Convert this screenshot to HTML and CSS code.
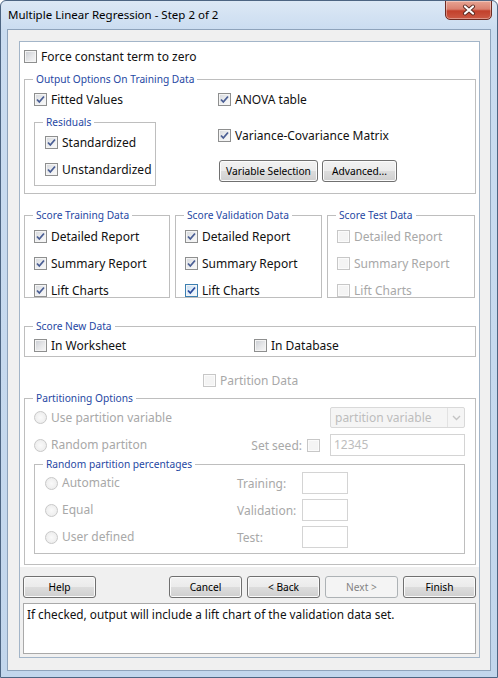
FILE: index.html
```html
<!DOCTYPE html>
<html lang="en">
<head>
    <meta charset="UTF-8">
    <title>Multiple Linear Regression - Step 2 of 2</title>
    <link rel="stylesheet" href="styles.css">
</head>
<body>
<div class="window">
    <div class="titlebar">
        <span class="title">Multiple Linear Regression - Step 2 of 2</span>
        <button class="close-btn" type="button">
            <svg width="14" height="12" viewBox="0 0 14 12">
                <path d="M3 2.5 L11 9.5 M11 2.5 L3 9.5" stroke="#5a2a22" stroke-width="4" stroke-linecap="round"/>
                <path d="M3 2.5 L11 9.5 M11 2.5 L3 9.5" stroke="#fff" stroke-width="2.2" stroke-linecap="round"/>
            </svg>
        </button>
    </div>

    <div class="client">
        <div class="panel">
            <div class="options">
                <label class="opt force"><span class="cb"></span>Force constant term to zero</label>

                <!-- Output options -->
                <div class="group output-group">
                    <span class="legend">Output Options On Training Data</span>
                    <div class="col-left">
                        <label class="opt"><span class="cb on"><svg width="11" height="11" viewBox="0 0 11 11"><path d="M2 5.5 L4.3 8 L9 2.5" fill="none" stroke="#4a5e94" stroke-width="1.8"/></svg></span>Fitted Values</label>
                        <div class="group residuals">
                            <span class="legend">Residuals</span>
                            <label class="opt"><span class="cb on"><svg width="11" height="11" viewBox="0 0 11 11"><path d="M2 5.5 L4.3 8 L9 2.5" fill="none" stroke="#4a5e94" stroke-width="1.8"/></svg></span>Standardized</label>
                            <label class="opt"><span class="cb on"><svg width="11" height="11" viewBox="0 0 11 11"><path d="M2 5.5 L4.3 8 L9 2.5" fill="none" stroke="#4a5e94" stroke-width="1.8"/></svg></span>Unstandardized</label>
                        </div>
                    </div>
                    <div class="col-right">
                        <label class="opt"><span class="cb on"><svg width="11" height="11" viewBox="0 0 11 11"><path d="M2 5.5 L4.3 8 L9 2.5" fill="none" stroke="#4a5e94" stroke-width="1.8"/></svg></span>ANOVA table</label>
                        <label class="opt covariance"><span class="cb on"><svg width="11" height="11" viewBox="0 0 11 11"><path d="M2 5.5 L4.3 8 L9 2.5" fill="none" stroke="#4a5e94" stroke-width="1.8"/></svg></span>Variance-Covariance Matrix</label>
                        <div class="btn-row">
                            <button class="btn btn-varsel" type="button">Variable Selection</button>
                            <button class="btn btn-adv" type="button">Advanced...</button>
                        </div>
                    </div>
                </div>

                <!-- Score groups -->
                <div class="score-row">
                    <div class="group score score-train">
                        <span class="legend">Score Training Data</span>
                        <label class="opt"><span class="cb on"><svg width="11" height="11" viewBox="0 0 11 11"><path d="M2 5.5 L4.3 8 L9 2.5" fill="none" stroke="#4a5e94" stroke-width="1.8"/></svg></span>Detailed Report</label>
                        <label class="opt"><span class="cb on"><svg width="11" height="11" viewBox="0 0 11 11"><path d="M2 5.5 L4.3 8 L9 2.5" fill="none" stroke="#4a5e94" stroke-width="1.8"/></svg></span>Summary Report</label>
                        <label class="opt"><span class="cb on"><svg width="11" height="11" viewBox="0 0 11 11"><path d="M2 5.5 L4.3 8 L9 2.5" fill="none" stroke="#4a5e94" stroke-width="1.8"/></svg></span>Lift Charts</label>
                    </div>
                    <div class="group score score-valid">
                        <span class="legend">Score Validation Data</span>
                        <label class="opt"><span class="cb on"><svg width="11" height="11" viewBox="0 0 11 11"><path d="M2 5.5 L4.3 8 L9 2.5" fill="none" stroke="#4a5e94" stroke-width="1.8"/></svg></span>Detailed Report</label>
                        <label class="opt"><span class="cb on"><svg width="11" height="11" viewBox="0 0 11 11"><path d="M2 5.5 L4.3 8 L9 2.5" fill="none" stroke="#4a5e94" stroke-width="1.8"/></svg></span>Summary Report</label>
                        <label class="opt"><span class="cb on focus"><svg width="11" height="11" viewBox="0 0 11 11"><path d="M2 5.5 L4.3 8 L9 2.5" fill="none" stroke="#2b4a9c" stroke-width="1.8"/></svg></span>Lift Charts</label>
                    </div>
                    <div class="group score score-test">
                        <span class="legend">Score Test Data</span>
                        <label class="opt disabled"><span class="cb dis"></span>Detailed Report</label>
                        <label class="opt disabled"><span class="cb dis"></span>Summary Report</label>
                        <label class="opt disabled"><span class="cb dis"></span>Lift Charts</label>
                    </div>
                </div>

                <!-- Score new data -->
                <div class="group score-new">
                    <span class="legend">Score New Data</span>
                    <label class="opt worksheet"><span class="cb"></span>In Worksheet</label>
                    <label class="opt"><span class="cb"></span>In Database</label>
                </div>

                <label class="opt disabled partition-data"><span class="cb dis"></span>Partition Data</label>

                <!-- Partitioning -->
                <div class="group partitioning">
                    <span class="legend">Partitioning Options</span>
                    <div class="part-row">
                        <label class="opt disabled"><span class="rb"></span>Use partition variable</label>
                        <div class="combo"><span class="combo-text">partition variable</span><span class="combo-arrow"><svg width="9" height="6" viewBox="0 0 9 6"><path d="M1 1 L4.5 4.5 L8 1" fill="none" stroke="#c4c4c4" stroke-width="1.4"/></svg></span></div>
                    </div>
                    <div class="part-row seed-row">
                        <label class="opt disabled"><span class="rb"></span>Random partiton</label>
                        <div class="seed">
                            <span class="seed-label">Set seed:</span>
                            <span class="cb dis"></span>
                            <span class="textbox seed-box">12345</span>
                        </div>
                    </div>
                    <div class="group percentages">
                        <span class="legend">Random partition percentages</span>
                        <div class="pct-row">
                            <label class="opt disabled pct-opt"><span class="rb"></span>Automatic</label>
                            <span class="pct-label">Training:</span>
                            <span class="textbox pct-box"></span>
                        </div>
                        <div class="pct-row">
                            <label class="opt disabled pct-opt"><span class="rb"></span>Equal</label>
                            <span class="pct-label">Validation:</span>
                            <span class="textbox pct-box"></span>
                        </div>
                        <div class="pct-row">
                            <label class="opt disabled pct-opt"><span class="rb"></span>User defined</label>
                            <span class="pct-label">Test:</span>
                            <span class="textbox pct-box"></span>
                        </div>
                    </div>
                </div>
            </div>

            <div class="footer">
                <div class="buttons">
                    <button class="btn wizard-btn" type="button">Help</button>
                    <div class="nav-buttons">
                        <button class="btn wizard-btn" type="button">Cancel</button>
                        <button class="btn wizard-btn" type="button">&lt; Back</button>
                        <button class="btn wizard-btn" type="button" disabled>Next &gt;</button>
                        <button class="btn wizard-btn" type="button">Finish</button>
                    </div>
                </div>
                <div class="description">If checked, output will include a lift chart of the validation data set.</div>
            </div>
        </div>
    </div>
</div>
</body>
</html>
```

FILE: styles.css
```css
* {
    box-sizing: border-box;
    margin: 0;
    padding: 0;
}

body {
    font-family: "Noto Sans", sans-serif;
    font-size: 12px;
    color: #111;
    background: #fff;
}

/* Window frame */
.window {
    width: 498px;
    height: 678px;
    border: 1px solid #4d6582;
    border-radius: 6px 6px 0 0;
    background: linear-gradient(to bottom, #dce8f5 0, #cadcf0 30px, #c2d6ec 100%);
    overflow: hidden;
}

.titlebar {
    height: 28px;
    display: flex;
    justify-content: space-between;
    align-items: flex-start;
}

.title {
    padding-left: 7px;
    margin-top: 6px;
    font-size: 11.5px;
    line-height: 16px;
    color: #000;
}

.close-btn {
    width: 47px;
    height: 20px;
    margin-top: -1px;
    margin-right: 5px;
    border: 1px solid #6e2b22;
    border-radius: 0 0 5px 5px;
    background: linear-gradient(to bottom, #e7a493 0, #d98170 45%, #c2402b 55%, #cc5a45 100%);
    box-shadow: inset 0 0 0 1px rgba(255, 255, 255, 0.35);
    display: flex;
    align-items: center;
    justify-content: center;
}

.client {
    margin: 0 6px;
    height: 642px;
    border: 1px solid #8ea3bb;
    background: #f0f0f0;
    padding: 11px 0 0 11px;
}

.panel {
    width: 461px;
    height: 617px;
    border: 1px solid #a3b5c8;
    display: flex;
    flex-direction: column;
}

.options {
    height: 525px;
    background: #fff;
    padding: 8px 3px 0 4px;
    display: flex;
    flex-direction: column;
}

/* Checkbox / radio rows */
.opt {
    display: flex;
    align-items: center;
    gap: 4px;
    height: 13px;
    white-space: nowrap;
    line-height: 16px;
}

.opt.disabled,
.seed-label,
.pct-label {
    color: #a8a8a8;
}

.cb {
    width: 13px;
    height: 13px;
    flex: none;
    border: 1px solid #8e8f8f;
    background: linear-gradient(135deg, #c9ccd2 0, #e6e7e9 55%, #f7f7f7 100%);
    box-shadow: inset 0 0 0 1px #f4f4f4;
    display: flex;
    align-items: center;
    justify-content: center;
}

.cb.on {
    background: linear-gradient(135deg, #d3d6db 0, #eeeff0 55%, #fafafa 100%);
}

.cb.focus {
    border-color: #3c7fb1;
    background: linear-gradient(135deg, #c4dcf2 0, #e6f1fb 60%, #f6fbff 100%);
}

.cb.dis {
    border-color: #c7c7c7;
    background: #f4f4f4;
    box-shadow: inset 0 0 0 1px #fbfbfb;
}

.rb {
    width: 13px;
    height: 13px;
    flex: none;
    border-radius: 50%;
    border: 1px solid #c8c8c8;
    background: radial-gradient(circle at 50% 50%, #fafafa 0, #eeeeee 70%);
}

/* Group boxes */
.group {
    position: relative;
    border: 1px solid #bebebe;
}

.legend {
    position: absolute;
    top: -9px;
    left: 8px;
    padding: 0 3px;
    background: #fff;
    color: #1f48a3;
    font-size: 10.2px;
    line-height: 16px;
    white-space: nowrap;
}

.output-group {
    margin-top: 16px;
    height: 115px;
    display: flex;
}

.col-left {
    width: 193px;
    padding: 13px 0 0 9px;
}

.residuals {
    margin-top: 16px;
    width: 122px;
    height: 64px;
    padding: 13px 0 0 10px;
    display: flex;
    flex-direction: column;
    gap: 14px;
}

.col-right {
    padding-top: 13px;
    display: flex;
    flex-direction: column;
}

.covariance {
    margin-top: 23px;
}

.btn-row {
    margin-top: 18px;
    padding-left: 1px;
    display: flex;
    gap: 4px;
}

.btn {
    height: 22px;
    border: 1px solid #707070;
    border-radius: 3px;
    background: linear-gradient(to bottom, #f2f2f2 0, #ebebeb 50%, #dddddd 50%, #cfcfcf 100%);
    box-shadow: inset 0 0 0 1px #fbfbfb;
    font-family: "Noto Sans", sans-serif;
    font-size: 10.2px;
    color: #000;
}

.btn:disabled {
    border-color: #adb2b5;
    background: #f4f4f4;
    box-shadow: none;
    color: #838383;
}

.btn-varsel {
    width: 99px;
}

.btn-adv {
    width: 75px;
}

/* Score groups */
.score-row {
    margin-top: 21px;
    height: 83px;
    display: flex;
    gap: 5px;
}

.score {
    padding: 14px 0 0 9px;
    display: flex;
    flex-direction: column;
    gap: 14px;
}

.score-train {
    width: 146px;
}

.score-valid {
    width: 147px;
}

.score-test {
    width: 148px;
}

.score-new {
    margin-top: 28px;
    height: 31px;
    padding: 12px 0 0 9px;
    display: flex;
}

.worksheet {
    width: 220px;
}

.partition-data {
    margin-top: 17px;
    margin-left: 179px;
}

/* Partitioning */
.partitioning {
    margin-top: 11px;
    height: 167px;
    padding: 8px 10px 0 9px;
}

.part-row {
    height: 21px;
    display: flex;
    align-items: center;
    justify-content: space-between;
}

.seed-row {
    margin-top: 6px;
    height: 22px;
}

.combo {
    width: 135px;
    height: 21px;
    border: 1px solid #d9d9d9;
    border-radius: 2px;
    background: #f5f5f5;
    display: flex;
    align-items: center;
    color: #bdbdbd;
}

.combo-text {
    flex: 1;
    padding-left: 4px;
    line-height: 16px;
}

.combo-arrow {
    width: 17px;
    height: 19px;
    border-left: 1px solid #e2e2e2;
    display: flex;
    align-items: center;
    justify-content: center;
}

.seed {
    display: flex;
    align-items: center;
}

.seed-label {
    margin-right: 5px;
}

.textbox {
    height: 22px;
    border: 1px solid #d4d4d4;
    background: #fff;
    color: #bdbdbd;
    line-height: 20px;
    padding-left: 3px;
}

.seed-box {
    width: 135px;
    margin-left: 10px;
}

.percentages {
    margin-top: 8px;
    height: 90px;
    padding: 7px 0 0 10px;
    display: flex;
    flex-direction: column;
    gap: 5px;
}

.pct-row {
    height: 22px;
    display: flex;
    align-items: center;
}

.pct-opt {
    width: 192px;
}

.pct-label {
    width: 65px;
}

.pct-box {
    width: 46px;
}

/* Footer */
.footer {
    flex: 1;
    padding: 9px 3px 3px 3px;
}

.buttons {
    display: flex;
    justify-content: space-between;
}

.nav-buttons {
    display: flex;
    gap: 5px;
}

.wizard-btn {
    width: 73px;
}

.description {
    margin-top: 5px;
    height: 51px;
    background: #fff;
    border: 1px solid #a9a9a9;
    padding: 2px 3px;
    font-size: 11.8px;
    line-height: 16px;
}
```
